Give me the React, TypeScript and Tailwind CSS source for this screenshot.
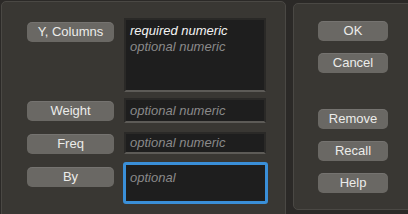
import React from "react";

const font = { fontFamily: '"Liberation Sans", Arial, sans-serif' };

function Btn({ label, w, className = "" }: { label: string; w: string; className?: string }) {
  return (
    <div
      className={`${w} h-[20px] rounded-[5px] bg-[#6a6864] text-[#ececea] text-[13px] leading-[20px] text-center shadow-[inset_0_1px_0_rgba(255,255,255,0.08)] ${className}`}
    >
      {label}
    </div>
  );
}

export default function App() {
  return (
    <div className="w-[408px] h-[214px] bg-[#2b2927] overflow-hidden flex items-start" style={font}>
      <div className="ml-[1px] mt-[1px] w-[285px] h-[240px] shrink-0 rounded-[5px] border border-[#4a4844] bg-[#393733] pt-[16px] pl-[25px] flex flex-col">
        <div className="flex items-start">
          <Btn label="Y, Columns" w="w-[87px]" className="mt-[4px]" />
          <div className="ml-[10px] w-[142px] h-[74px] border-2 border-[#2a2927] border-b-[#5d5b57] bg-[#1e1e1e] pl-[4px] pt-[3px] text-[13px] leading-[16px] italic">
            <div className="text-[#f4f4f4]">required numeric</div>
            <div className="text-[#8a8a8a]">optional numeric</div>
          </div>
        </div>
        <div className="flex items-start mt-[6px]">
          <Btn label="Weight" w="w-[87px]" className="mt-[3px]" />
          <div className="ml-[10px] w-[142px] h-[25px] border-2 border-[#2a2927] border-b-[#5d5b57] bg-[#1e1e1e] pl-[4px] pt-[3px] text-[13px] leading-[16px] italic text-[#8a8a8a]">
            optional numeric
          </div>
        </div>
        <div className="flex items-start mt-[9px]">
          <Btn label="Freq" w="w-[87px]" className="mt-[2px]" />
          <div className="ml-[10px] w-[142px] h-[22px] border-2 border-[#2a2927] border-b-[#5d5b57] bg-[#1e1e1e] pl-[4px] pt-[1px] text-[13px] leading-[16px] italic text-[#8a8a8a]">
            optional numeric
          </div>
        </div>
        <div className="flex items-start mt-[8px]">
          <Btn label="By" w="w-[87px]" className="mt-[5px]" />
          <div className="ml-[9px] w-[145px] h-[42px] rounded-[3px] border-[3px] border-[#3a8fd8] bg-[#1e1e1e] pl-[4px] pt-[5px] text-[13px] leading-[16px] italic text-[#8a8a8a]">
            optional
          </div>
        </div>
      </div>
      <div className="ml-[7px] mt-[3px] w-[130px] h-[207px] shrink-0 rounded-[5px] border border-[#4a4844] bg-[#393733] pt-[17px] pl-[24px] flex flex-col">
        <Btn label="OK" w="w-[70px]" />
        <Btn label="Cancel" w="w-[70px]" className="mt-[12px]" />
        <Btn label="Remove" w="w-[70px]" className="mt-[36px]" />
        <Btn label="Recall" w="w-[70px]" className="mt-[12px]" />
        <Btn label="Help" w="w-[70px]" className="mt-[12px]" />
      </div>
    </div>
  );
}
